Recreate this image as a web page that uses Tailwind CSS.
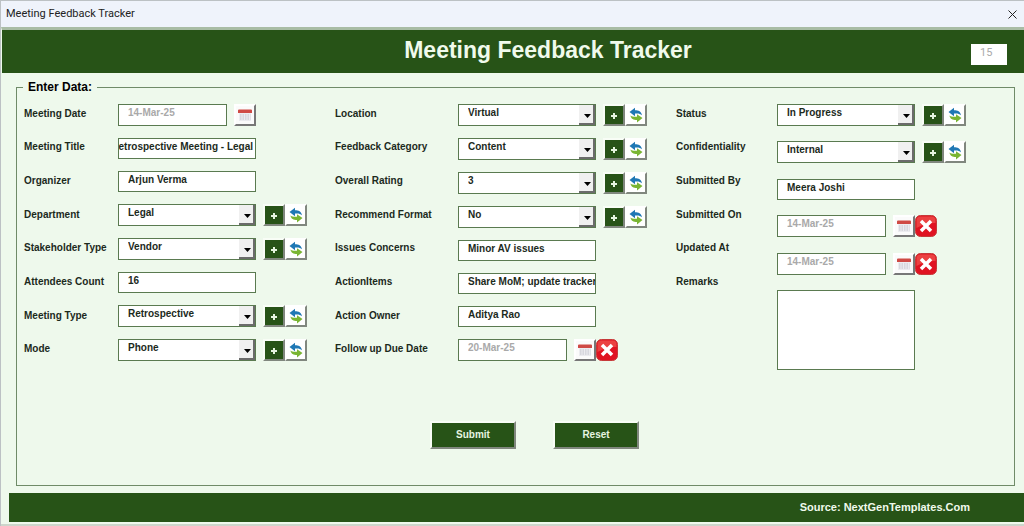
<!DOCTYPE html>
<html lang="en">
<head>
  <meta charset="UTF-8">
  <meta name="viewport" content="width=device-width, initial-scale=1.0">
  <title>Meeting Feedback Tracker</title>
  <script src="https://cdn.jsdelivr.net/npm/@tailwindcss/browser@4"></script>
</head>
<body class="bg-[#eef9ec] font-['Liberation_Sans',Arial,sans-serif] text-[10px] leading-[12px] font-bold text-[#1c2a1c]">

  <!-- Shared icons -->
  <svg class="hidden" xmlns="http://www.w3.org/2000/svg">
    <symbol id="icon-refresh" viewBox="0 0 16 16">
      <path fill="#1f78b4" d="M1.500 5 7 .8v2.400c3.500 0 6.500 1.300 7 5C12.300 6.600 10 6.300 7 6.600v2.600z" />
      <path fill="#79b532" d="M14.500 11 9 15.500V13c-3.500 0-6-1.300-6.500-4.600 1.700 1.300 3.500 1.600 6.500 1.300V7.200z" />
    </symbol>
    <symbol id="icon-calendar" viewBox="0 0 16 16">
      <path fill="#ececf0" d="M2 6h12v8H2z" />
      <path fill="#cf4a45" d="M2 2.500h12a1 1 0 0 1 1 1V6H1V3.500a1 1 0 0 1 1-1z" />
      <path stroke="#c3c3cc" stroke-width="1" stroke-dasharray="1.500 1" d="M3 8h10.500M3 10h10.500M3 12h10.500" />
    </symbol>
    <symbol id="icon-cross" viewBox="0 0 22 22">
      <rect x=".5" y=".5" width="21" height="21" rx="5" fill="#e01322" stroke="#c63a3a" />
      <path fill="#f0564f" d="M5.500 1.500h11a4 4 0 0 1 4 4V8c-6 0-12 1-19 5V5.500a4 4 0 0 1 4-4z" opacity=".7" />
      <path fill="none" stroke="#fff" stroke-width="3.500" d="m6 6 10 10M16 6 6 16" />
    </symbol>
    <symbol id="icon-plus" viewBox="0 0 8 8">
      <path fill="none" stroke="#e6f5e0" stroke-width="2" d="M4 1v6M1 4h6" />
    </symbol>
    <symbol id="icon-arrow" viewBox="0 0 7 4">
      <path fill="#000" d="M0 0h7L3.500 4z" />
    </symbol>
  </svg>

  <div class="flex min-h-screen flex-col border-t border-l border-[#bcc1c4]">
    <!-- Title bar -->
    <header class="flex h-[26px] items-center justify-between bg-[#eff3fb] pr-[7px] pl-[5px]">
      <span class="font-['Roboto',sans-serif] text-[11px] leading-[16px] font-normal text-[#222]">Meeting Feedback Tracker</span>
      <button type="button" aria-label="Close">
        <svg class="size-[9px]" viewBox="0 0 9 9" fill="none" stroke="#222"><path d="m.5.500 8 8M8.500.500l-8 8" /></svg>
      </button>
    </header>

    <!-- Banner -->
    <div class="grid h-[46px] grid-cols-[1fr_auto_1fr] border-t-[3px] border-l border-[#a9bca5] border-l-[#eef9ec] bg-[#275317] pl-[70px]">
      <h1 class="col-start-2 pt-[6px] text-[23px] leading-[28px] text-[#f0faec]">Meeting Feedback Tracker</h1>
      <input type="text" aria-label="Record number" value="15" disabled class="mt-[14px] mr-[17px] h-[21px] w-9 justify-self-end bg-white pb-[4px] pl-[9px] font-['Roboto',sans-serif] text-[11px] font-normal text-[#aaa]">
    </div>

    <form class="flex flex-1 flex-col pt-[7px]">
      <fieldset class="mr-[9px] ml-[15px] flex-1 border border-[#6f8b68] pb-[35px]">
        <legend class="ml-[6px] px-[5px] text-[12px] leading-[14px] text-black">Enter Data:</legend>

        <div class="grid grid-cols-[311fr_341fr_338fr] pt-[2px] pl-[7px]">
          <!-- Left column -->
          <div class="flex">
            <div class="mt-px grid h-[269px] w-[94px] grid-rows-8 items-center">
              <label for="meeting-date">Meeting Date</label>
              <label for="meeting-title">Meeting Title</label>
              <label for="organizer">Organizer</label>
              <label for="department">Department</label>
              <label for="stakeholder">Stakeholder Type</label>
              <label for="attendees">Attendees Count</label>
              <label for="meeting-type">Meeting Type</label>
              <label for="mode">Mode</label>
            </div>
            <div class="mt-2 flex h-[257px] flex-col justify-between">
              <div class="flex">
                <input id="meeting-date" type="text" value="14-Mar-25" disabled class="mr-[7px] h-[22px] w-[109px] border border-[#5a7a50] bg-white pb-[5px] pl-[9px] text-[#a9a9a9]">
                <button type="button" aria-label="Pick meeting date" class="flex size-[22px] items-center justify-center border-2 border-[#777] border-t-white border-l-white bg-[#fbfbfb]"><svg class="size-4"><use href="#icon-calendar" /></svg></button>
              </div>
              <!-- dir keeps the end of a long title in view -->
              <input id="meeting-title" type="text" dir="rtl" value="Retrospective Meeting - Legal" class="h-[21px] w-[138px] border border-[#5a7a50] bg-white pr-[2px] pb-[4px]">
              <input id="organizer" type="text" value="Arjun Verma" class="h-[21px] w-[138px] border border-[#5a7a50] bg-white pb-[4px] pl-[9px]">
              <div class="flex">
                <div class="relative mr-[7px]">
                  <select id="department" class="block h-[22px] w-[138px] appearance-none border border-[#5a7a50] bg-white pb-[5px] pl-[9px]"><option>Legal</option></select>
                  <span class="pointer-events-none absolute top-px right-px flex h-5 w-4 items-center justify-center border-r-2 border-b-2 border-[#6b6b6b] bg-[#f0f0f0] pt-[3px] pl-[2px]"><svg class="h-1 w-[7px]"><use href="#icon-arrow" /></svg></span>
                </div>
                <button type="button" aria-label="Add department" class="flex size-[22px] items-center justify-center border-2 border-[#80877e] border-t-[#f8fdf6] border-l-[#f8fdf6] bg-[#275317] pt-[2px]"><svg class="size-2"><use href="#icon-plus" /></svg></button>
                <button type="button" aria-label="Refresh departments" class="flex size-[22px] items-center justify-center border-2 border-[#80877e] border-t-white border-l-white bg-white"><svg class="size-4"><use href="#icon-refresh" /></svg></button>
              </div>
              <div class="flex">
                <div class="relative mr-[7px]">
                  <select id="stakeholder" class="block h-[22px] w-[138px] appearance-none border border-[#5a7a50] bg-white pb-[5px] pl-[9px]"><option>Vendor</option></select>
                  <span class="pointer-events-none absolute top-px right-px flex h-5 w-4 items-center justify-center border-r-2 border-b-2 border-[#6b6b6b] bg-[#f0f0f0] pt-[3px] pl-[2px]"><svg class="h-1 w-[7px]"><use href="#icon-arrow" /></svg></span>
                </div>
                <button type="button" aria-label="Add stakeholder type" class="flex size-[22px] items-center justify-center border-2 border-[#80877e] border-t-[#f8fdf6] border-l-[#f8fdf6] bg-[#275317] pt-[2px]"><svg class="size-2"><use href="#icon-plus" /></svg></button>
                <button type="button" aria-label="Refresh stakeholder types" class="flex size-[22px] items-center justify-center border-2 border-[#80877e] border-t-white border-l-white bg-white"><svg class="size-4"><use href="#icon-refresh" /></svg></button>
              </div>
              <input id="attendees" type="text" value="16" class="h-[21px] w-[138px] border border-[#5a7a50] bg-white pb-[4px] pl-[9px]">
              <div class="flex">
                <div class="relative mr-[7px]">
                  <select id="meeting-type" class="block h-[22px] w-[138px] appearance-none border border-[#5a7a50] bg-white pb-[5px] pl-[9px]"><option>Retrospective</option></select>
                  <span class="pointer-events-none absolute top-px right-px flex h-5 w-4 items-center justify-center border-r-2 border-b-2 border-[#6b6b6b] bg-[#f0f0f0] pt-[3px] pl-[2px]"><svg class="h-1 w-[7px]"><use href="#icon-arrow" /></svg></span>
                </div>
                <button type="button" aria-label="Add meeting type" class="flex size-[22px] items-center justify-center border-2 border-[#80877e] border-t-[#f8fdf6] border-l-[#f8fdf6] bg-[#275317] pt-[2px]"><svg class="size-2"><use href="#icon-plus" /></svg></button>
                <button type="button" aria-label="Refresh meeting types" class="flex size-[22px] items-center justify-center border-2 border-[#80877e] border-t-white border-l-white bg-white"><svg class="size-4"><use href="#icon-refresh" /></svg></button>
              </div>
              <div class="flex">
                <div class="relative mr-[7px]">
                  <select id="mode" class="block h-[22px] w-[138px] appearance-none border border-[#5a7a50] bg-white pb-[5px] pl-[9px]"><option>Phone</option></select>
                  <span class="pointer-events-none absolute top-px right-px flex h-5 w-4 items-center justify-center border-r-2 border-b-2 border-[#6b6b6b] bg-[#f0f0f0] pt-[3px] pl-[2px]"><svg class="h-1 w-[7px]"><use href="#icon-arrow" /></svg></span>
                </div>
                <button type="button" aria-label="Add mode" class="flex size-[22px] items-center justify-center border-2 border-[#80877e] border-t-[#f8fdf6] border-l-[#f8fdf6] bg-[#275317] pt-[2px]"><svg class="size-2"><use href="#icon-plus" /></svg></button>
                <button type="button" aria-label="Refresh modes" class="flex size-[22px] items-center justify-center border-2 border-[#80877e] border-t-white border-l-white bg-white"><svg class="size-4"><use href="#icon-refresh" /></svg></button>
              </div>
            </div>
          </div>

          <!-- Middle column -->
          <div class="flex">
            <div class="mt-px grid h-[269px] w-[123px] grid-rows-8 items-center">
              <label for="location">Location</label>
              <label for="category">Feedback Category</label>
              <label for="rating">Overall Rating</label>
              <label for="recommend">Recommend Format</label>
              <label for="issues">Issues Concerns</label>
              <label for="action-items">ActionItems</label>
              <label for="action-owner">Action Owner</label>
              <label for="follow-up">Follow up Due Date</label>
            </div>
            <div class="mt-2 flex h-[257px] flex-col justify-between">
              <div class="flex">
                <div class="relative mr-[7px]">
                  <select id="location" class="block h-[22px] w-[138px] appearance-none border border-[#5a7a50] bg-white pb-[5px] pl-[9px]"><option>Virtual</option></select>
                  <span class="pointer-events-none absolute top-px right-px flex h-5 w-4 items-center justify-center border-r-2 border-b-2 border-[#6b6b6b] bg-[#f0f0f0] pt-[3px] pl-[2px]"><svg class="h-1 w-[7px]"><use href="#icon-arrow" /></svg></span>
                </div>
                <button type="button" aria-label="Add location" class="flex size-[22px] items-center justify-center border-2 border-[#80877e] border-t-[#f8fdf6] border-l-[#f8fdf6] bg-[#275317] pt-[2px]"><svg class="size-2"><use href="#icon-plus" /></svg></button>
                <button type="button" aria-label="Refresh locations" class="flex size-[22px] items-center justify-center border-2 border-[#80877e] border-t-white border-l-white bg-white"><svg class="size-4"><use href="#icon-refresh" /></svg></button>
              </div>
              <div class="flex">
                <div class="relative mr-[7px]">
                  <select id="category" class="block h-[22px] w-[138px] appearance-none border border-[#5a7a50] bg-white pb-[5px] pl-[9px]"><option>Content</option></select>
                  <span class="pointer-events-none absolute top-px right-px flex h-5 w-4 items-center justify-center border-r-2 border-b-2 border-[#6b6b6b] bg-[#f0f0f0] pt-[3px] pl-[2px]"><svg class="h-1 w-[7px]"><use href="#icon-arrow" /></svg></span>
                </div>
                <button type="button" aria-label="Add feedback category" class="flex size-[22px] items-center justify-center border-2 border-[#80877e] border-t-[#f8fdf6] border-l-[#f8fdf6] bg-[#275317] pt-[2px]"><svg class="size-2"><use href="#icon-plus" /></svg></button>
                <button type="button" aria-label="Refresh feedback categories" class="flex size-[22px] items-center justify-center border-2 border-[#80877e] border-t-white border-l-white bg-white"><svg class="size-4"><use href="#icon-refresh" /></svg></button>
              </div>
              <div class="flex">
                <div class="relative mr-[7px]">
                  <select id="rating" class="block h-[22px] w-[138px] appearance-none border border-[#5a7a50] bg-white pb-[5px] pl-[9px]"><option>3</option></select>
                  <span class="pointer-events-none absolute top-px right-px flex h-5 w-4 items-center justify-center border-r-2 border-b-2 border-[#6b6b6b] bg-[#f0f0f0] pt-[3px] pl-[2px]"><svg class="h-1 w-[7px]"><use href="#icon-arrow" /></svg></span>
                </div>
                <button type="button" aria-label="Add rating" class="flex size-[22px] items-center justify-center border-2 border-[#80877e] border-t-[#f8fdf6] border-l-[#f8fdf6] bg-[#275317] pt-[2px]"><svg class="size-2"><use href="#icon-plus" /></svg></button>
                <button type="button" aria-label="Refresh ratings" class="flex size-[22px] items-center justify-center border-2 border-[#80877e] border-t-white border-l-white bg-white"><svg class="size-4"><use href="#icon-refresh" /></svg></button>
              </div>
              <div class="flex">
                <div class="relative mr-[7px]">
                  <select id="recommend" class="block h-[22px] w-[138px] appearance-none border border-[#5a7a50] bg-white pb-[5px] pl-[9px]"><option>No</option></select>
                  <span class="pointer-events-none absolute top-px right-px flex h-5 w-4 items-center justify-center border-r-2 border-b-2 border-[#6b6b6b] bg-[#f0f0f0] pt-[3px] pl-[2px]"><svg class="h-1 w-[7px]"><use href="#icon-arrow" /></svg></span>
                </div>
                <button type="button" aria-label="Add recommended format" class="flex size-[22px] items-center justify-center border-2 border-[#80877e] border-t-[#f8fdf6] border-l-[#f8fdf6] bg-[#275317] pt-[2px]"><svg class="size-2"><use href="#icon-plus" /></svg></button>
                <button type="button" aria-label="Refresh recommended formats" class="flex size-[22px] items-center justify-center border-2 border-[#80877e] border-t-white border-l-white bg-white"><svg class="size-4"><use href="#icon-refresh" /></svg></button>
              </div>
              <input id="issues" type="text" value="Minor AV issues" class="h-[21px] w-[138px] border border-[#5a7a50] bg-white pb-[4px] pl-[9px]">
              <input id="action-items" type="text" value="Share MoM; update tracker" class="h-[21px] w-[138px] border border-[#5a7a50] bg-white pb-[4px] pl-[9px]">
              <input id="action-owner" type="text" value="Aditya Rao" class="h-[21px] w-[138px] border border-[#5a7a50] bg-white pb-[4px] pl-[9px]">
              <div class="flex">
                <input id="follow-up" type="text" value="20-Mar-25" disabled class="mr-[7px] h-[22px] w-[109px] border border-[#5a7a50] bg-white pb-[5px] pl-[9px] text-[#a9a9a9]">
                <button type="button" aria-label="Pick follow up date" class="flex size-[22px] items-center justify-center border-2 border-[#777] border-t-white border-l-white bg-[#fbfbfb]"><svg class="size-4"><use href="#icon-calendar" /></svg></button>
                <button type="button" aria-label="Clear follow up date"><svg class="size-[22px]"><use href="#icon-cross" /></svg></button>
              </div>
            </div>
          </div>

          <!-- Right column -->
          <div class="flex">
            <div class="mt-px grid h-[269px] w-[101px] grid-rows-8 items-center">
              <label for="status">Status</label>
              <label for="confidentiality">Confidentiality</label>
              <label for="submitted-by">Submitted By</label>
              <label for="submitted-on">Submitted On</label>
              <label for="updated-at">Updated At</label>
              <label for="remarks">Remarks</label>
            </div>
            <div class="mt-2 flex h-[266px] flex-col justify-between">
              <div class="flex">
                <div class="relative mr-[7px]">
                  <select id="status" class="block h-[22px] w-[138px] appearance-none border border-[#5a7a50] bg-white pb-[5px] pl-[9px]"><option>In Progress</option></select>
                  <span class="pointer-events-none absolute top-px right-px flex h-5 w-4 items-center justify-center border-r-2 border-b-2 border-[#6b6b6b] bg-[#f0f0f0] pt-[3px] pl-[2px]"><svg class="h-1 w-[7px]"><use href="#icon-arrow" /></svg></span>
                </div>
                <button type="button" aria-label="Add status" class="flex size-[22px] items-center justify-center border-2 border-[#80877e] border-t-[#f8fdf6] border-l-[#f8fdf6] bg-[#275317] pt-[2px]"><svg class="size-2"><use href="#icon-plus" /></svg></button>
                <button type="button" aria-label="Refresh statuses" class="flex size-[22px] items-center justify-center border-2 border-[#80877e] border-t-white border-l-white bg-white"><svg class="size-4"><use href="#icon-refresh" /></svg></button>
              </div>
              <div class="flex">
                <div class="relative mr-[7px]">
                  <select id="confidentiality" class="block h-[22px] w-[138px] appearance-none border border-[#5a7a50] bg-white pb-[5px] pl-[9px]"><option>Internal</option></select>
                  <span class="pointer-events-none absolute top-px right-px flex h-5 w-4 items-center justify-center border-r-2 border-b-2 border-[#6b6b6b] bg-[#f0f0f0] pt-[3px] pl-[2px]"><svg class="h-1 w-[7px]"><use href="#icon-arrow" /></svg></span>
                </div>
                <button type="button" aria-label="Add confidentiality" class="flex size-[22px] items-center justify-center border-2 border-[#80877e] border-t-[#f8fdf6] border-l-[#f8fdf6] bg-[#275317] pt-[2px]"><svg class="size-2"><use href="#icon-plus" /></svg></button>
                <button type="button" aria-label="Refresh confidentiality" class="flex size-[22px] items-center justify-center border-2 border-[#80877e] border-t-white border-l-white bg-white"><svg class="size-4"><use href="#icon-refresh" /></svg></button>
              </div>
              <input id="submitted-by" type="text" value="Meera Joshi" class="h-[21px] w-[138px] border border-[#5a7a50] bg-white pb-[4px] pl-[9px]">
              <div class="flex">
                <input id="submitted-on" type="text" value="14-Mar-25" disabled class="mr-[7px] h-[22px] w-[109px] border border-[#5a7a50] bg-white pb-[5px] pl-[9px] text-[#a9a9a9]">
                <button type="button" aria-label="Pick submitted date" class="flex size-[22px] items-center justify-center border-2 border-[#777] border-t-white border-l-white bg-[#fbfbfb]"><svg class="size-4"><use href="#icon-calendar" /></svg></button>
                <button type="button" aria-label="Clear submitted date"><svg class="size-[22px]"><use href="#icon-cross" /></svg></button>
              </div>
              <div class="flex">
                <input id="updated-at" type="text" value="14-Mar-25" disabled class="mr-[7px] h-[22px] w-[109px] border border-[#5a7a50] bg-white pb-[5px] pl-[9px] text-[#a9a9a9]">
                <button type="button" aria-label="Pick updated date" class="flex size-[22px] items-center justify-center border-2 border-[#777] border-t-white border-l-white bg-[#fbfbfb]"><svg class="size-4"><use href="#icon-calendar" /></svg></button>
                <button type="button" aria-label="Clear updated date"><svg class="size-[22px]"><use href="#icon-cross" /></svg></button>
              </div>
              <textarea id="remarks" class="h-20 w-[138px] resize-none border border-[#5a7a50] bg-white px-[9px]"></textarea>
            </div>
          </div>
        </div>

        <!-- Form actions -->
        <div class="flex justify-center gap-[37px] pt-[51px] pl-[38px]">
          <button type="submit" class="h-7 w-[86px] border-2 border-[#80877e] border-t-[#f8fdf6] border-l-[#f8fdf6] bg-[#275317] text-[#e6f5e0]">Submit</button>
          <button type="reset" class="h-7 w-[86px] border-2 border-[#80877e] border-t-[#f8fdf6] border-l-[#f8fdf6] bg-[#275317] text-[#e6f5e0]">Reset</button>
        </div>
      </fieldset>
    </form>

    <!-- Footer -->
    <footer class="mt-[7px] border-b-2 border-[#cdd6cb] pb-[2px] pl-2">
      <p class="h-[29px] bg-[#275317] pr-[54px] text-right text-[11px] leading-[28px] text-[#f0faec]">Source: NextGenTemplates.Com</p>
    </footer>
  </div>
</body>
</html>
